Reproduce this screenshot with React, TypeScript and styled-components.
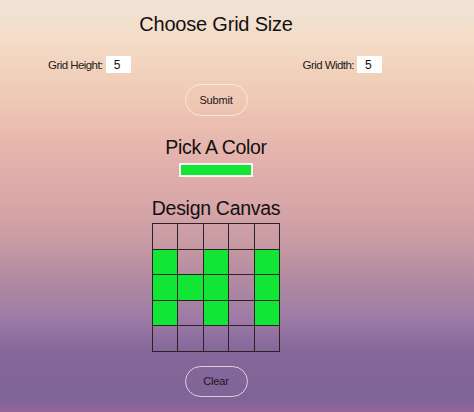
import React from "react";
import styled, { createGlobalStyle } from "styled-components";

const GlobalStyle = createGlobalStyle`
  html, body {
    margin: 0;
    padding: 0;
    min-height: 100%;
  }
  body {
    min-height: 412px;
    font-family: "Liberation Sans", Arial, sans-serif;
    color: #1c1418;
    background: linear-gradient(
      to bottom,
      #efe4d8 0px,
      #f4dcc6 40px,
      #efc8b4 100px,
      #e5b4ad 150px,
      #d9a8a8 200px,
      #c99ba3 240px,
      #b28ba1 280px,
      #9c7aa5 320px,
      #86689b 350px,
      #7f6497 400px,
      #96679b 412px
    );
  }
`;

const Page = styled.main`
  width: 432px;
  display: flex;
  flex-direction: column;
  align-items: center;
  text-align: center;
`;

const Title = styled.h1`
  margin: 12px 0 0;
  font-size: 20px;
  line-height: 24px;
  font-weight: 400;
  letter-spacing: -0.2px;
  color: #141012;
`;

const SubTitle = styled.h2<{ $top: number }>`
  margin: ${(p) => p.$top}px 0 0;
  font-size: 19.5px;
  line-height: 22px;
  font-weight: 400;
  letter-spacing: -0.3px;
  color: #141012;
`;

const SizeRow = styled.form`
  align-self: stretch;
  display: flex;
  justify-content: space-between;
  align-items: center;
  padding: 0 50px 0 48px;
  margin-top: 20px;
  height: 17px;
`;

const Field = styled.label`
  display: flex;
  align-items: center;
  gap: 3px;
  font-size: 11.5px;
  letter-spacing: -0.55px;
  color: #241c20;
`;

const NumberBox = styled.span`
  display: flex;
  align-items: center;
  width: 25px;
  height: 17px;
  box-sizing: border-box;
  padding-left: 8px;
  background: #ffffff;
  font-size: 12px;
  letter-spacing: 0;
  color: #111;
`;

const PillButton = styled.button<{ $top: number; $h: number }>`
  margin-top: ${(p) => p.$top}px;
  width: 63px;
  height: ${(p) => p.$h}px;
  box-sizing: border-box;
  border: 1px solid rgba(255, 238, 240, 0.75);
  border-radius: 16px;
  background: transparent;
  font-family: "Liberation Sans", Arial, sans-serif;
  font-size: 11px;
  letter-spacing: -0.2px;
  color: #1e1622;
  padding: 0;
  cursor: pointer;
`;

const Swatch = styled.span`
  display: block;
  margin-top: 5px;
  width: 74px;
  height: 14px;
  box-sizing: border-box;
  border: 2px solid #fbf4f2;
  background: #12e634;
`;

const Canvas = styled.div`
  margin-top: 4px;
  display: grid;
  grid-template-columns: repeat(5, 25.5px);
  grid-auto-rows: 25.5px;
  border-top: 1px solid #2d2029;
  border-left: 1px solid #2d2029;
`;

const Cell = styled.div<{ $on: boolean }>`
  box-sizing: border-box;
  border-right: 1px solid #2d2029;
  border-bottom: 1px solid #2d2029;
  background: ${(p) => (p.$on ? "#12e634" : "transparent")};
`;

const pattern = [
  [0, 0, 0, 0, 0],
  [1, 0, 1, 0, 1],
  [1, 1, 1, 0, 1],
  [1, 0, 1, 0, 1],
  [0, 0, 0, 0, 0],
];

export default function App() {
  return (
    <>
      <GlobalStyle />
      <Page>
        <Title>Choose Grid Size</Title>
        <SizeRow>
          <Field>
            Grid Height:
            <NumberBox>5</NumberBox>
          </Field>
          <Field>
            Grid Width:
            <NumberBox>5</NumberBox>
          </Field>
        </SizeRow>
        <PillButton $top={11} $h={32} type="button">
          Submit
        </PillButton>
        <SubTitle $top={20}>Pick A Color</SubTitle>
        <Swatch />
        <SubTitle $top={20}>Design Canvas</SubTitle>
        <Canvas>
          {pattern.map((row, r) =>
            row.map((v, c) => <Cell key={`${r}-${c}`} $on={v === 1} />)
          )}
        </Canvas>
        <PillButton $top={14} $h={31} type="button">
          Clear
        </PillButton>
      </Page>
    </>
  );
}
